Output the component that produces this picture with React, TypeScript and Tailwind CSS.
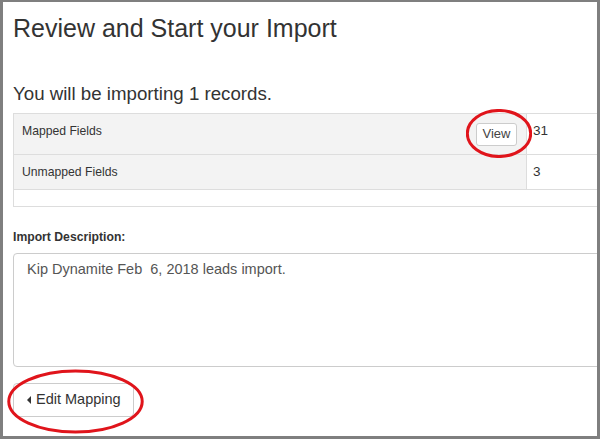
import React from "react";

function Ellipse({ className }: { className: string }) {
  return (
    <svg className={`pointer-events-none absolute ${className}`} viewBox="0 0 100 100" preserveAspectRatio="none">
      <ellipse cx="50" cy="50" rx="48" ry="47" fill="none" stroke="#e0141b" strokeWidth="3" vectorEffect="non-scaling-stroke" />
    </svg>
  );
}

export default function App() {
  return (
    <div className="relative h-[439px] w-[600px] overflow-hidden border-t-2 border-r-[3px] border-b-[3px] border-l-[3px] border-[#7f7f7f] bg-white font-['Liberation_Sans',Arial,sans-serif] text-[#333]">
      <div className="w-[620px] pl-[10px]">
        <h1 className="pt-[12px] text-[25px] leading-[28px]">Review and Start your Import</h1>

        <p className="mt-[41px] text-[18.7px] leading-[22px]">You will be importing 1 records.</p>

        <div className="relative mt-[8px] border border-[#ddd] text-[12.2px]">
          <div className="flex h-[41px] border-b border-[#ddd]">
            <div className="flex w-[512px] items-center justify-between bg-[#f3f3f3] pr-[9px] pl-[8px]">
              <span className="-mt-[5px]">Mapped Fields</span>
              <button className="h-[23px] w-[41px] rounded-[3px] border border-[#ccc] bg-white text-[13px] text-[#444]">View</button>
            </div>
            <div className="flex flex-1 items-center border-l border-[#ddd] pl-[6px] text-[13.5px]">
              <span className="-mt-[5px]">31</span>
            </div>
          </div>
          <div className="flex h-[35px] border-b border-[#ddd]">
            <div className="flex w-[512px] items-center bg-[#f3f3f3] pl-[8px]">Unmapped Fields</div>
            <div className="flex flex-1 items-center border-l border-[#ddd] pl-[6px] text-[13.5px]">3</div>
          </div>
          <div className="h-[16px]" />
        </div>

        <label className="mt-[22px] block text-[12.2px] leading-[16px] font-bold">Import Description:</label>
        <div className="mt-[8px] h-[114px] rounded-l-[4px] border border-[#ccc] px-[13px] py-[5px] text-[14.5px] leading-[20px] text-[#555]">
          Kip Dynamite Feb&nbsp; 6, 2018 leads import.
        </div>

        <button className="mt-[16px] flex h-[34px] w-[121px] items-center gap-[5px] rounded-[4px] border border-[#ccc] bg-white pl-[13px] text-[14.5px] text-[#333]">
          <span className="h-0 w-0 border-t-[4px] border-r-[4px] border-b-[4px] border-t-transparent border-r-[#333] border-b-transparent" />
          <span>Edit Mapping</span>
        </button>
      </div>

      <Ellipse className="top-[107px] left-[463px] h-[49px] w-[66px]" />
      <Ellipse className="top-[367px] left-[3px] h-[65px] w-[139px]" />
    </div>
  );
}
